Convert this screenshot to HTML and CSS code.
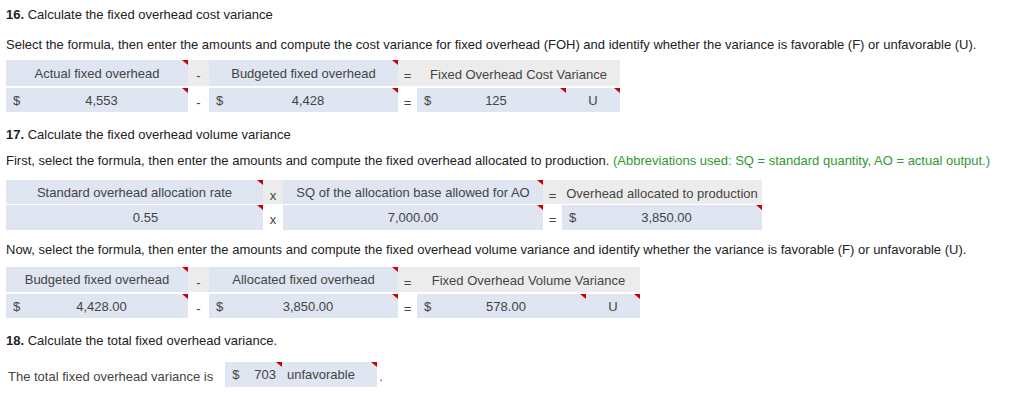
FILE: index.html
```html
<!DOCTYPE html>
<html>
<head>
<meta charset="utf-8">
<link rel="stylesheet" href="styles.css">
</head>
<body>
<div class="page">
  <p class="q q16"><b>16.</b> Calculate the fixed overhead cost variance</p>
  <p class="ins ins1">Select the formula, then enter the amounts and compute the cost variance for fixed overhead (FOH) and identify whether the variance is favorable (F) or unfavorable (U).</p>

  <div class="fx fx1">
    <div class="hd tri">Actual fixed overhead</div>
    <div class="oph">-</div>
    <div class="hd tri">Budgeted fixed overhead</div>
    <div class="oph">=</div>
    <div class="resh">Fixed Overhead Cost Variance</div>

    <div class="val tri"><span class="cur">$</span><span class="amt">4,553</span></div>
    <div class="opv">-</div>
    <div class="val tri"><span class="cur">$</span><span class="amt">4,428</span></div>
    <div class="opv">=</div>
    <div class="resv">
      <div class="val sub tri"><span class="cur">$</span><span class="amt">125</span></div>
      <div class="fu tri">U</div>
    </div>
  </div>

  <p class="q q17"><b>17.</b> Calculate the fixed overhead volume variance</p>
  <p class="ins ins2">First, select the formula, then enter the amounts and compute the fixed overhead allocated to production. <span class="green">(Abbreviations used: SQ = standard quantity, AO = actual output.)</span></p>

  <div class="fx fx2">
    <div class="hd tri">Standard overhead allocation rate</div>
    <div class="oph">x</div>
    <div class="hd tri">SQ of the allocation base allowed for AO</div>
    <div class="oph">=</div>
    <div class="resh">Overhead allocated to production</div>

    <div class="val plain tri rate"><span class="amt">0.55</span></div>
    <div class="opv">x</div>
    <div class="val plain tri"><span class="amt">7,000.00</span></div>
    <div class="opv">=</div>
    <div class="val tri"><span class="cur">$</span><span class="amt">3,850.00</span></div>
  </div>

  <p class="ins ins3">Now, select the formula, then enter the amounts and compute the fixed overhead volume variance and identify whether the variance is favorable (F) or unfavorable (U).</p>

  <div class="fx fx3">
    <div class="hd tri">Budgeted fixed overhead</div>
    <div class="oph">-</div>
    <div class="hd tri">Allocated fixed overhead</div>
    <div class="oph">=</div>
    <div class="resh">Fixed Overhead Volume Variance</div>

    <div class="val tri"><span class="cur">$</span><span class="amt">4,428.00</span></div>
    <div class="opv">-</div>
    <div class="val tri"><span class="cur">$</span><span class="amt">3,850.00</span></div>
    <div class="opv">=</div>
    <div class="resv">
      <div class="val sub tri"><span class="cur">$</span><span class="amt">578.00</span></div>
      <div class="fu tri">U</div>
    </div>
  </div>

  <p class="q q18"><b>18.</b> Calculate the total fixed overhead variance.</p>

  <div class="total">
    <span class="tlabel">The total fixed overhead variance is</span>
    <span class="tbox">
      <span class="tcur">$</span>
      <span class="tamt tri">703</span>
      <span class="tword tri">unfavorable</span>
    </span>
    <span class="tdot">.</span>
  </div>
</div>
</body>
</html>
```

FILE: styles.css
```css
html, body {
  margin: 0;
  padding: 0;
  background: #ffffff;
}

.page {
  padding: 0 6px;
  font-family: "Liberation Sans", Arial, sans-serif;
  font-size: 13px;
  color: #222222;
}

p {
  margin: 0;
  line-height: 15px;
  white-space: nowrap;
}

.q16 { padding-top: 7px; }
.ins1 { margin-top: 15px; }
.fx1 { margin-top: 8px; }
.q17 { margin-top: 15px; }
.ins2 { margin-top: 11px; }
.fx2 { margin-top: 12px; }
.ins3 { margin-top: 12px; }
.fx3 { margin-top: 10px; }
.q18 { margin-top: 15px; }

.green { color: #2f9a2f; }

.fx {
  display: grid;
  grid-template-rows: 26px 24px;
  row-gap: 2px;
  color: #444444;
}

.fx1 { grid-template-columns: 182px 21px 189px 19px 203px; }
.fx2 {
  grid-template-columns: 257px 20px 260px 19px 200px;
  grid-template-rows: 24px 25px;
  row-gap: 1px;
}
.fx3 {
  grid-template-columns: 182px 21px 189px 19px 223px;
  grid-template-rows: 25px 24px;
}

.hd {
  background: #dfe5f1;
  display: flex;
  align-items: center;
  justify-content: center;
  white-space: nowrap;
}

.oph {
  background: #ececec;
  text-align: center;
  padding-top: 8px;
  line-height: 15px;
}

.resh {
  background: #ececec;
  display: flex;
  align-items: center;
  justify-content: center;
  white-space: nowrap;
  padding-top: 2px;
}

.opv {
  background: #ffffff;
  text-align: center;
  padding-top: 7px;
  line-height: 15px;
}

.val {
  background: #dfe5f1;
  display: grid;
  grid-template-columns: 9px 1fr;
  align-items: center;
  white-space: nowrap;
}

.val.plain {
  grid-template-columns: 1fr;
}

.val.rate {
  padding-left: 22px;
}

.cur {
  padding-left: 7px;
}

.amt {
  text-align: center;
}

.resv {
  display: flex;
  background: #dfe5f1;
}

.resv .sub {
  flex: 1;
}

.fu {
  width: 54px;
  display: flex;
  align-items: center;
  justify-content: center;
}

.tri {
  position: relative;
}

.tri::after {
  content: "";
  position: absolute;
  top: 0;
  right: 0;
  width: 0;
  height: 0;
  border-top: 5px solid #cc0000;
  border-left: 6px solid transparent;
}

.total {
  margin-top: 14px;
  display: flex;
  align-items: flex-start;
  color: #444444;
  line-height: 15px;
}

.tlabel {
  padding-left: 2px;
  padding-top: 7px;
}

.tbox {
  margin-left: 12px;
  width: 152px;
  height: 25px;
  background: #dfe5f1;
  display: flex;
  align-items: stretch;
  box-sizing: border-box;
}

.tcur {
  padding-left: 7px;
  padding-top: 5px;
  width: 29px;
  box-sizing: border-box;
}

.tamt {
  padding-top: 5px;
  padding-right: 6px;
}

.tword {
  flex: 1;
  padding-top: 5px;
  padding-left: 5px;
}

.tdot {
  padding-left: 2px;
  padding-top: 7px;
}
```
